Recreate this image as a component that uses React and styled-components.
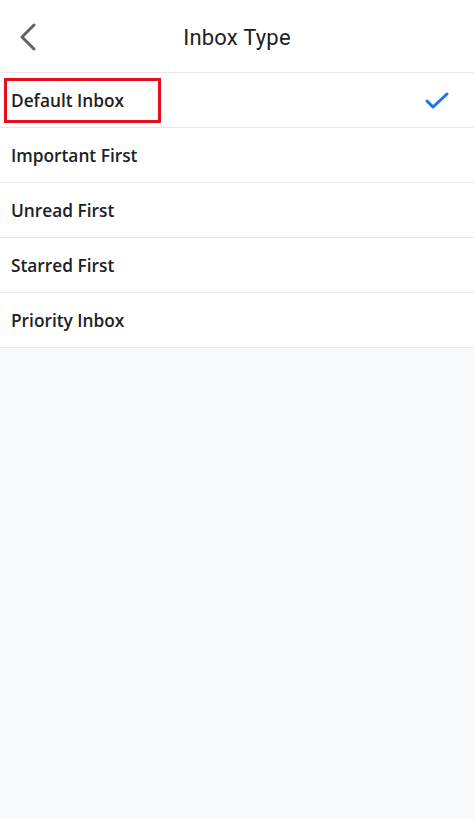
import React from 'react'
import styled, { createGlobalStyle } from 'styled-components'

const GlobalStyle = createGlobalStyle`
  html, body {
    margin: 0;
    padding: 0;
    background: #f8f9fa;
  }
  body {
    font-family: Roboto, "Liberation Sans", sans-serif;
  }
`

const Screen = styled.div`
  width: 474px;
  height: 819px;
  background: #f8f9fa;
  display: flex;
  flex-direction: column;
`

const Header = styled.div`
  height: 72px;
  background: #ffffff;
  display: flex;
  align-items: center;
  justify-content: center;
  position: relative;
  border-bottom: 1px solid #e6e7e9;
`

const BackButton = styled.button`
  position: absolute;
  left: 12px;
  top: 19px;
  width: 32px;
  height: 36px;
  padding: 0;
  border: none;
  background: transparent;
  display: flex;
  align-items: center;
  justify-content: center;
`

const Title = styled.h1`
  margin: 2px 0 0 0;
  font-size: 22px;
  font-weight: 400;
  color: #202124;
  letter-spacing: 0.2px;
`

const List = styled.ul`
  list-style: none;
  margin: 0;
  padding: 0;
  background: #ffffff;
`

const Row = styled.li`
  display: flex;
  align-items: center;
  justify-content: space-between;
  padding: 1px 24px 0 11px;
  box-sizing: border-box;
  border-bottom: 1px solid #e6e7e9;
  position: relative;
  height: 55px;
`

const Label = styled.span`
  font-family: "Open Sans", Roboto, sans-serif;
  font-size: 17.3px;
  font-weight: 600;
  color: #202124;
`

const Highlight = styled.div`
  position: absolute;
  left: 4px;
  top: 5px;
  width: 151px;
  height: 39px;
  border: 3px solid #e3101c;
`

const options = [
  { label: 'Default Inbox', selected: true },
  { label: 'Important First' },
  { label: 'Unread First' },
  { label: 'Starred First' },
  { label: 'Priority Inbox' },
]

const App = () => {
  return (
    <>
      <GlobalStyle />
      <Screen>
        <Header>
          <BackButton aria-label="Back">
            <svg width="20" height="30" viewBox="0 0 20 30">
              <path d="M16 3 L4 15 L16 27" fill="none" stroke="#5f6368" strokeWidth="3" strokeLinecap="round" strokeLinejoin="round" />
            </svg>
          </BackButton>
          <Title>Inbox Type</Title>
        </Header>
        <List>
          {options.map((o) => (
            <Row key={o.label}>
              {o.selected && <Highlight />}
              <Label>{o.label}</Label>
              {o.selected && (
                <svg width="26" height="20" viewBox="0 0 26 20">
                  <path d="M3 10 L9 16 L23 3" fill="none" stroke="#1a73e8" strokeWidth="3" strokeLinecap="round" strokeLinejoin="round" />
                </svg>
              )}
            </Row>
          ))}
        </List>
      </Screen>
    </>
  )
}

export default App
